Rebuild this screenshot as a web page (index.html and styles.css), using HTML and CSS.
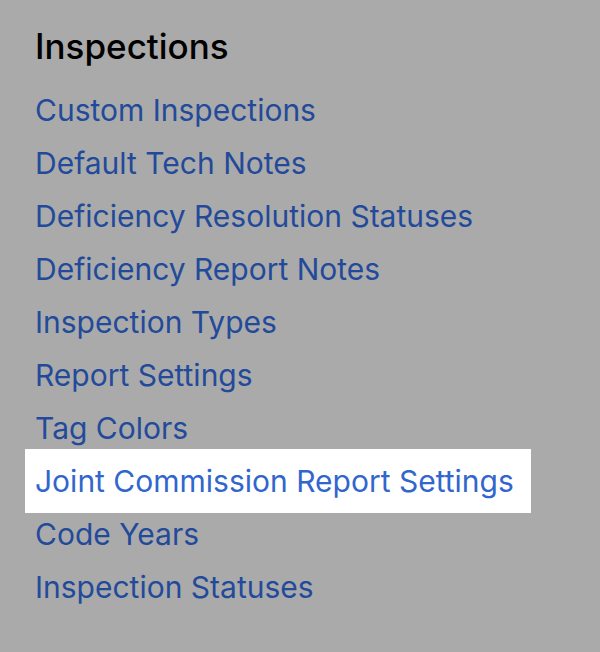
FILE: index.html
```html
<!DOCTYPE html>
<html>
<head>
<meta charset="utf-8">
<link rel="stylesheet" href="styles.css">
</head>
<body>
<div class="panel">
  <h2 class="title">Inspections</h2>
  <ul class="links">
    <li><a class="link">Custom Inspections</a></li>
    <li><a class="link">Default Tech Notes</a></li>
    <li><a class="link">Deficiency Resolution Statuses</a></li>
    <li><a class="link">Deficiency Report Notes</a></li>
    <li><a class="link">Inspection Types</a></li>
    <li><a class="link">Report Settings</a></li>
    <li><a class="link">Tag Colors</a></li>
    <li><a class="link link-active">Joint Commission Report Settings</a></li>
    <li><a class="link">Code Years</a></li>
    <li><a class="link">Inspection Statuses</a></li>
  </ul>
</div>
</body>
</html>
```
FILE: styles.css
```css
html, body {
  margin: 0;
  padding: 0;
  background: #aaaaaa;
}
body {
  width: 600px;
  height: 652px;
  font-family: "Inter", "Liberation Sans", sans-serif;
}
.panel {
  padding: 26px 0 0 35px;
}
.title {
  margin: 0;
  font-size: 35px;
  font-weight: 500;
  line-height: 40px;
  color: #000;
}
.links {
  list-style: none;
  margin: 18px 0 0;
  padding: 0;
}
.links li {
  display: block;
  height: 53px;
}
.link {
  display: inline-block;
  vertical-align: top;
  font-size: 30px;
  line-height: 53px;
  color: #234a9a;
}
.link-active {
  background: #ffffff;
  color: #3166cc;
  padding: 6.5px 17px 4.5px 10px;
  margin: -6.5px 0 0 -10px;
}
```
